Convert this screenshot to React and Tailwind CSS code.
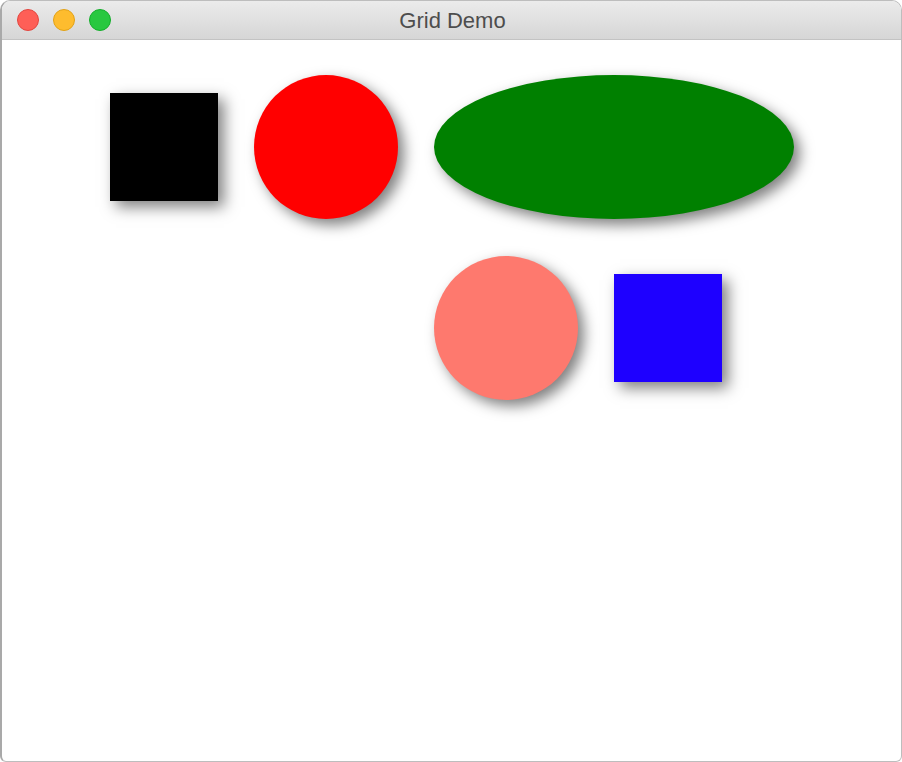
import React from "react";

function TrafficLight({ color, border }) {
  return <span className={`block w-[22px] h-[22px] rounded-full border ${color} ${border}`} />;
}

export default function App() {
  return (
    <div className="w-[902px] h-[762px] bg-white" style={{ fontFamily: '"Liberation Sans", Arial, sans-serif' }}>
      <div className="w-full h-full flex flex-col rounded-t-[10px] rounded-b-[6px] border border-[#bdbdbd] border-l-2 border-l-[#a9a9a9] overflow-hidden bg-white">
        {/* title bar */}
        <div className="relative h-[39px] shrink-0 flex items-center bg-gradient-to-b from-[#ebebeb] to-[#d6d6d6] border-b border-[#c3c3c3]">
          <div className="flex items-center gap-[14px] pl-[15px]">
            <TrafficLight color="bg-[#fe5f57]" border="border-[#e2463f]" />
            <TrafficLight color="bg-[#febc2e]" border="border-[#e1a116]" />
            <TrafficLight color="bg-[#28c840]" border="border-[#14ae2b]" />
          </div>
          <div className="absolute inset-0 flex items-center justify-center text-[22px] text-[#4d4d4d] pl-[2px]">
            Grid Demo
          </div>
        </div>

        {/* content */}
        <div className="flex-1 pt-[35px] pl-[108px]">
          <div className="grid grid-cols-[108px_144px_144px_180px] grid-rows-[144px_144px] gap-x-[36px] gap-y-[37px]">
            <div className="self-center w-[108px] h-[108px] bg-black shadow-[6px_6px_14px_rgba(0,0,0,0.5)]" />
            <div className="w-[144px] h-[144px] rounded-full bg-[#ff0000] shadow-[6px_6px_14px_rgba(0,0,0,0.5)]" />
            <div className="col-span-2 w-[360px] h-[144px] rounded-[50%] bg-[#008000] shadow-[6px_6px_14px_rgba(0,0,0,0.5)]" />
            <div className="col-start-3 w-[144px] h-[144px] rounded-full bg-[#fe796e] shadow-[6px_6px_14px_rgba(0,0,0,0.5)]" />
            <div className="self-center w-[108px] h-[108px] bg-[#1e00ff] shadow-[6px_6px_14px_rgba(0,0,0,0.5)]" />
          </div>
        </div>
      </div>
    </div>
  );
}
